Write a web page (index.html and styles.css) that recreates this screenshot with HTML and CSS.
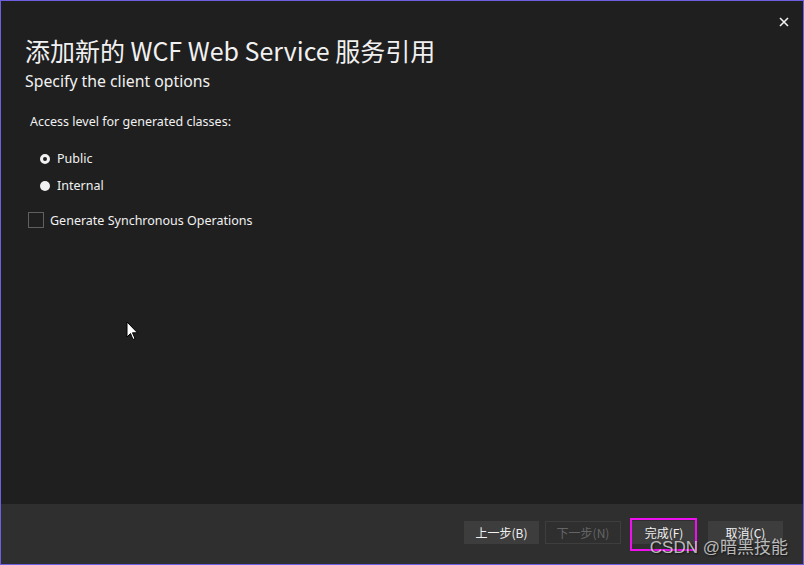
FILE: index.html
```html
<!DOCTYPE html>
<html>
<head>
    <meta charset="utf-8">
    <title>添加新的 WCF Web Service 服务引用</title>
    <link rel="stylesheet" href="styles.css">
</head>
<body>
    <div class="dialog">
        <button class="close-btn" title="Close">
            <svg width="10" height="10" viewBox="0 0 10 10"><path d="M1 1L9 9M9 1L1 9" stroke="#f1f1f1" stroke-width="1.6"/></svg>
        </button>
        <div class="content">
            <h1 class="title">添加新的 WCF Web Service 服务引用</h1>
            <div class="subtitle">Specify the client options</div>

            <div class="options">
                <div class="group-label">Access level for generated classes:</div>
                <label class="radio-row"><span class="radio checked"></span>Public</label>
                <label class="radio-row"><span class="radio"></span>Internal</label>
                <label class="check-row"><span class="checkbox"></span>Generate Synchronous Operations</label>
            </div>

            <svg class="cursor" width="13" height="20" viewBox="0 0 13 20">
                <path d="M1 1L1 16L4.5 12.5L7 18.5L9 17.5L6.5 11.8L11.5 11.8Z" fill="#fff" stroke="#000" stroke-width="1"/>
            </svg>
        </div>
        <div class="footer">
            <button class="btn back">上一步(B)</button>
            <button class="btn disabled">下一步(N)</button>
            <span class="highlight"><button class="btn">完成(F)</button></span>
            <button class="btn cancel">取消(C)</button>
            <div class="watermark">CSDN @暗黑技能</div>
        </div>
    </div>
</body>
</html>
```

FILE: styles.css
```css
* {
    box-sizing: border-box;
    margin: 0;
    padding: 0;
}

body {
    width: 804px;
    height: 565px;
    overflow: hidden;
    background: #1f1f1f;
    font-family: "Noto Sans", "Noto Sans CJK SC", sans-serif;
    color: #f1f1f1;
}

.dialog {
    position: relative;
    width: 804px;
    height: 565px;
    border: 1px solid #6d5fe0;
    display: flex;
    flex-direction: column;
    background: #1f1f1f;
}

.close-btn {
    position: absolute;
    top: 15px;
    right: 13px;
    width: 12px;
    height: 12px;
    background: none;
    border: none;
    display: flex;
    align-items: center;
    justify-content: center;
}

.content {
    flex: 1;
    position: relative;
    padding: 34px 24px 0;
}

.title {
    font-family: "Noto Sans CJK SC", sans-serif;
    font-weight: normal;
    font-size: 25px;
    line-height: 30px;
}

.subtitle {
    font-size: 15.8px;
    line-height: 20px;
    margin-top: 6px;
}

.options {
    margin-top: 22px;
    padding-left: 3px;
    font-size: 12.5px;
}

.group-label {
    margin-left: 2px;
    line-height: 18px;
}

.radio-row {
    display: flex;
    align-items: center;
    height: 27px;
    margin-left: 12px;
}

.radio-row:first-of-type {
    margin-top: 14px;
}

.radio {
    width: 10px;
    height: 10px;
    border-radius: 50%;
    background: #f1f1f1;
    margin-right: 7px;
}

.radio.checked {
    background: #1f1f1f;
    border: 3px solid #f1f1f1;
}

.check-row {
    display: flex;
    align-items: center;
    margin-top: 11px;
    height: 20px;
}

.checkbox {
    width: 16px;
    height: 16px;
    border: 1px solid #5f5f5f;
    margin-right: 6px;
}

.cursor {
    position: absolute;
    left: 125px;
    top: 320px;
}

.footer {
    position: relative;
    height: 60px;
    background: #2f2f2f;
    display: flex;
    align-items: center;
    justify-content: flex-end;
    padding: 0 20px 3px 0;
}

.btn {
    height: 23px;
    width: 75px;
    background: #3d3d3d;
    color: #f1f1f1;
    border: 1px solid #3d3d3d;
    font-family: "Noto Sans CJK SC", sans-serif;
    font-size: 12px;
}

.btn.back {
    margin-right: 6px;
}

.btn.disabled {
    width: 76px;
    background: transparent;
    border-color: #3e3e3e;
    color: #656565;
    margin-right: 11px;
}

.highlight {
    position: relative;
    display: inline-flex;
    margin-right: 12px;
}

.highlight .btn {
    width: 64px;
}

.highlight::after {
    content: "";
    position: absolute;
    left: -2px;
    top: -3px;
    right: -1px;
    bottom: -7px;
    border: 2px solid #ee10ee;
}

.watermark {
    position: absolute;
    right: 15px;
    bottom: 6px;
    font-family: "Liberation Sans", "Noto Sans CJK SC", sans-serif;
    font-size: 17px;
    white-space: nowrap;
    color: rgba(225, 225, 225, 0.8);
    text-shadow: 1px 1px 2px rgba(0, 0, 0, 0.6);
    pointer-events: none;
}
```
